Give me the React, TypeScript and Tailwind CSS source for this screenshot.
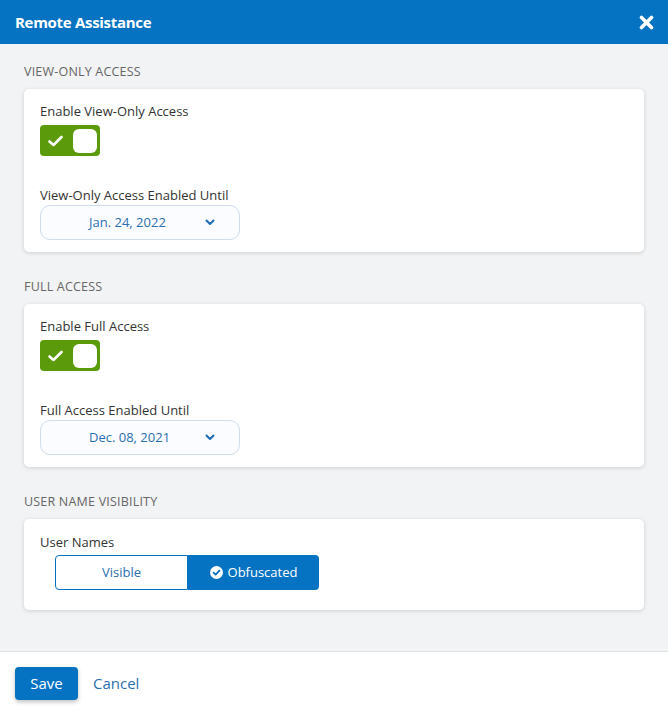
import React from 'react';

const font = { fontFamily: '"Open Sans", "Noto Sans", Arial, sans-serif' };

const Toggle = () => (
  <div className="flex h-[31px] w-[60px] items-center justify-between rounded-[4px] bg-[#5b9a0a] pl-[8px] pr-[3px]">
    <svg width="15" height="12" viewBox="0 0 15 12">
      <path d="M1.5 6.5 L5.5 10 L13.5 2" fill="none" stroke="white" strokeWidth="2.6" strokeLinecap="round" strokeLinejoin="round" />
    </svg>
    <div className="h-[24px] w-[24px] rounded-[6px] bg-white" />
  </div>
);

const DateSelect = ({ value }: { value: string }) => (
  <div className="flex h-[35px] w-[200px] items-center rounded-[10px] border border-[#cfdceb] bg-[#fafcff] pl-[48px] pr-[24px]">
    <span className="flex-1 text-[13px] text-[#2a6fb0]">{value}</span>
    <svg width="10" height="7" viewBox="0 0 10 7">
      <path d="M1.5 1.5 L5 5 L8.5 1.5" fill="none" stroke="#1c6cb6" strokeWidth="2" strokeLinecap="round" strokeLinejoin="round" />
    </svg>
  </div>
);

const AccessCard = ({ title, label, until, date }: { title: string; label: string; until: string; date: string }) => (
  <div>
    <div className="text-[12.5px] leading-[17px] uppercase tracking-[0.2px] text-[#666] mb-[9px]">{title}</div>
    <div className="rounded-[5px] bg-white px-[16px] pt-[13px] pb-[12px] shadow-[0_1px_4px_rgba(0,0,0,0.15)]">
      <div className="text-[13px] leading-[18px] text-[#333] mb-[5px]">{label}</div>
      <Toggle />
      <div className="mt-[30px] text-[13px] leading-[18px] text-[#333] mb-[1px]">{until}</div>
      <DateSelect value={date} />
    </div>
  </div>
);

export default function App() {
  return (
    <div style={font} className="flex h-[714px] w-[668px] flex-col bg-white">
      <div className="flex h-[44px] shrink-0 items-center justify-between bg-[#0573c1] pl-[15px] pr-[14px]">
        <span className="text-[15px] font-bold tracking-[-0.3px] text-white">Remote Assistance</span>
        <svg width="15" height="15" viewBox="0 0 15 15">
          <path d="M2.5 2.5 L12.5 12.5 M12.5 2.5 L2.5 12.5" stroke="white" strokeWidth="3.6" strokeLinecap="round" />
        </svg>
      </div>

      <div className="flex flex-1 flex-col gap-[26px] border-b border-[#dcdfe3] bg-[#f2f3f4] px-[24px] pt-[19px]">
        <AccessCard title="View-Only Access" label="Enable View-Only Access" until="View-Only Access Enabled Until" date="Jan. 24, 2022" />
        <AccessCard title="Full Access" label="Enable Full Access" until="Full Access Enabled Until" date="Dec. 08, 2021" />

        <div>
          <div className="text-[12.5px] leading-[17px] uppercase tracking-[0.2px] text-[#666] mb-[9px]">User Name Visibility</div>
          <div className="rounded-[5px] bg-white px-[16px] pt-[14px] pb-[20px] shadow-[0_1px_4px_rgba(0,0,0,0.15)]">
            <div className="text-[13px] leading-[18px] text-[#333] mb-[4px]">User Names</div>
            <div className="ml-[15px] flex h-[35px] w-[264px]">
              <button className="flex-1 rounded-l-[4px] border border-[#0573c1] bg-white text-[13px] text-[#2a6fb0]">Visible</button>
              <button className="flex flex-1 items-center justify-center gap-[5px] rounded-r-[4px] bg-[#0573c1] text-[13px] text-white">
                <svg width="13" height="13" viewBox="0 0 13 13">
                  <circle cx="6.5" cy="6.5" r="6.5" fill="white" />
                  <path d="M3.6 6.7 L5.6 8.6 L9.4 4.6" fill="none" stroke="#0573c1" strokeWidth="1.8" strokeLinecap="round" strokeLinejoin="round" />
                </svg>
                Obfuscated
              </button>
            </div>
          </div>
        </div>
      </div>

      <div className="flex h-[62px] shrink-0 items-center gap-[15px] px-[15px]">
        <button className="h-[33px] w-[63px] rounded-[4px] bg-[#0573c1] text-[15px] text-white shadow-[0_2px_4px_rgba(0,0,0,0.25)]">Save</button>
        <button className="text-[15px] text-[#2a6fb0]">Cancel</button>
      </div>
    </div>
  );
}
